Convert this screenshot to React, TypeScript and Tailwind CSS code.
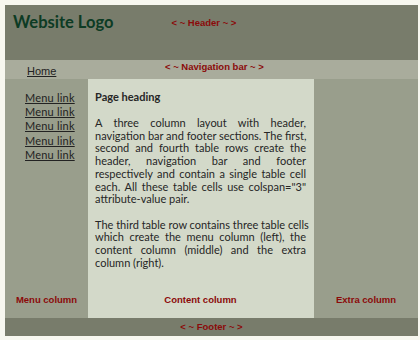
const paraOne = [
  "A three column layout with header,",
  "navigation bar and footer sections. The first,",
  "second and fourth table rows create the",
  "header, navigation bar and footer",
  "respectively and contain a single table cell",
  'each. All these table cells use colspan="3"',
];

const paraTwo = [
  "The third table row contains three table cells",
  "which create the menu column (left), the",
  "content column (middle) and the extra",
];

const menu = ["Menu link", "Menu link", "Menu link", "Menu link", "Menu link"];

function Justified({ lines, last }: { lines: string[]; last: string }) {
  return (
    <p className="leading-[12.7px]">
      {lines.map((line, i) => (
        <span key={i} className="block whitespace-nowrap text-justify [text-align-last:justify]">
          {line}
        </span>
      ))}
      <span className="block whitespace-nowrap">{last}</span>
    </p>
  );
}

export default function App() {
  const label = "font-['Liberation_Sans',Arial,sans-serif] text-[9.5px] font-bold text-[#8b0a0a]";
  const body = "font-['Lato','Noto_Sans',sans-serif]";

  return (
    <div className="h-[340px] w-[420px] bg-[#f7f7ef] pt-[5px] pl-[5px] pr-[2px]">
      <div className="grid w-[413px] grid-cols-[83px_226px_104px] grid-rows-[55px_19px_239px_18px]">
        {/* header */}
        <div className="col-span-3 flex items-start bg-[#787c6b] pt-[7px] pl-[8px]">
          <span className={`${body} text-[16.5px] leading-[20px] font-bold text-[#0c3b24]`}>Website Logo</span>
          <span className={`${label} ml-[58px] mt-[4px]`}>&lt; ~ Header ~ &gt;</span>
        </div>

        {/* nav */}
        <div className="relative col-span-3 flex items-center bg-[#a9ac9c] pl-[22px]">
          <a href="#" className="mt-[3px] font-['Liberation_Sans',Arial,sans-serif] text-[11px] text-[#222] underline">
            Home
          </a>
          <span className={`${label} absolute left-[160px] top-[0px]`}>&lt; ~ Navigation bar ~ &gt;</span>
        </div>

        {/* menu column */}
        <div className="flex flex-col bg-[#999e8c]">
          <ul className={`${body} mt-[12px] flex flex-col gap-[1.2px] pl-[20px] text-[11px] leading-[13px] tracking-[0.2px] text-[#222]`}>
            {menu.map((m, i) => (
              <li key={i}>
                <a href="#" className="underline">
                  {m}
                </a>
              </li>
            ))}
          </ul>
          <span className={`${label} mt-auto mb-[11px] text-center`}>Menu column</span>
        </div>

        {/* content column */}
        <div className={`${body} flex flex-col bg-[#d3d9c9] pl-[7px] pr-[8px] text-[11px] text-[#262626]`}>
          <h1 className="mt-[11px] text-[11px] leading-[13px] font-bold">Page heading</h1>
          <div className="mt-[14px]">
            <Justified lines={paraOne} last="attribute-value pair." />
          </div>
          <div className="mt-[12.7px]">
            <Justified lines={paraTwo} last="column (right)." />
          </div>
          <span className={`${label} mt-auto mb-[11px] text-center`}>Content column</span>
        </div>

        {/* extra column */}
        <div className="flex flex-col bg-[#999e8c]">
          <span className={`${label} mt-auto mb-[11px] text-center`}>Extra column</span>
        </div>

        {/* footer */}
        <div className="col-span-3 flex items-center justify-center bg-[#787c6b]">
          <span className={label}>&lt; ~ Footer ~ &gt;</span>
        </div>
      </div>
    </div>
  );
}
